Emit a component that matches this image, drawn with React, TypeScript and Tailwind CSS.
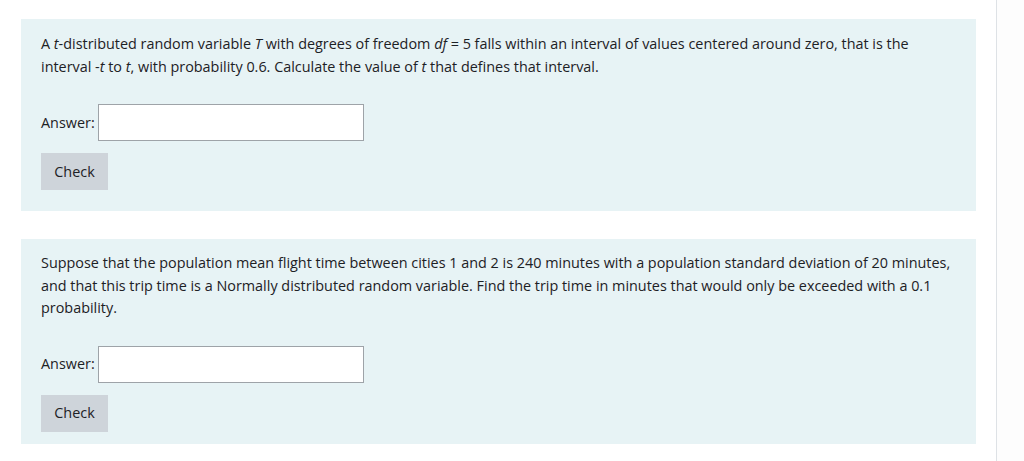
const questions = [
  {
    id: "q1",
    pad: "pt-[14px] pb-[21px]",
    text: (
      <>
        A <i>t</i>-distributed random variable <i>T</i> with degrees of freedom <i>df</i> = 5 falls within an
        interval of values centered around zero, that is the interval -<i>t</i> to <i>t</i>, with probability 0.6.
        Calculate the value of <i>t</i> that defines that interval.
      </>
    ),
  },
  {
    id: "q2",
    pad: "pt-[13px] pb-3",
    text: (
      <>
        Suppose that the population mean flight time between cities 1 and 2 is 240 minutes with a population standard
        deviation of 20 minutes, and that this trip time is a Normally distributed random variable. Find the trip time in
        minutes that would only be exceeded with a 0.1 probability.
      </>
    ),
  },
];

function Question({ id, text, pad }: { id: string; text: React.ReactNode; pad: string }) {
  return (
    <div className={`bg-[#e7f3f5] px-5 ${pad}`}>
      <p className="leading-[22.5px]">{text}</p>
      <div className="mt-[26px] flex items-center gap-[3px]">
        <label htmlFor={id}>Answer:</label>
        <input
          id={id}
          type="text"
          className="h-[37px] w-[266px] border border-[#9ea3a8] bg-white px-2 outline-none"
        />
      </div>
      <button className="mt-3 h-[37px] w-[67px] bg-[#ced4da] text-[#1d2125]">Check</button>
    </div>
  );
}

export default function App() {
  return (
    <div className="flex min-h-[461px] bg-white font-['Open_Sans',sans-serif] text-[14.4px] text-[#1d2125]">
      <main className="w-[996px] shrink-0 pl-[21px] pr-5 pt-[19px] flex flex-col gap-[28px]">
        {questions.map((q) => (
          <Question key={q.id} id={q.id} text={q.text} pad={q.pad} />
        ))}
      </main>
      <aside className="flex-1 border-l border-[#dee2e6] bg-[#fdfdfd]" />
    </div>
  );
}
